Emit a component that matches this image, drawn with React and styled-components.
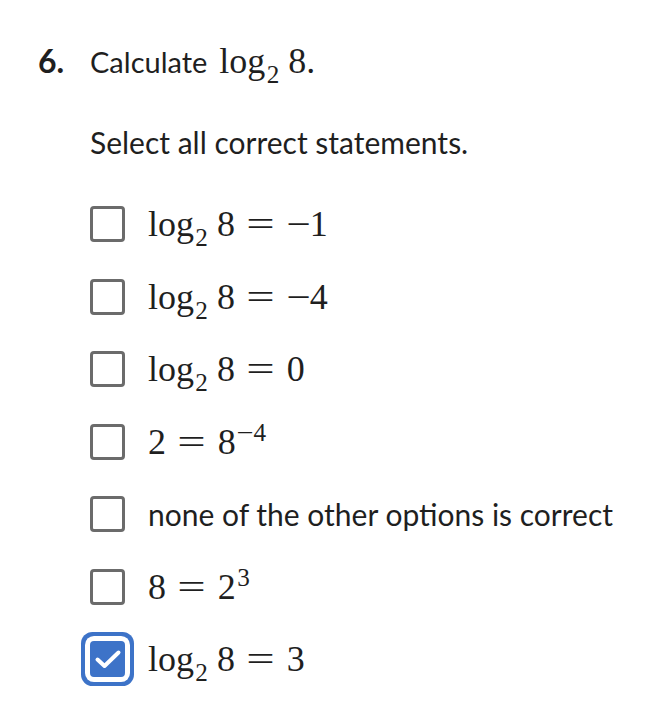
import React, { useState } from "react";
import styled, { createGlobalStyle } from "styled-components";

const GlobalStyle = createGlobalStyle`
  body {
    margin: 0;
    background: #ffffff;
    color: #1f1f1f;
    font-family: "Source Sans Pro", Lato, "Noto Sans", sans-serif;
  }
`;

const Page = styled.div`
  padding: 40px 0 0 38px;
`;

const Question = styled.div`
  display: flex;
  align-items: baseline;
`;

const Number = styled.div`
  width: 52px;
  font-size: 32px;
  font-weight: 700;
`;

const Body = styled.div`
  display: flex;
  flex-direction: column;
`;

const Prompt = styled.div`
  font-size: 29px;
  line-height: 44px;
`;

const Hint = styled.div`
  font-size: 30px;
  margin-top: 40px;
  margin-bottom: 28px;
`;

const Options = styled.ul`
  list-style: none;
  margin: 0;
  padding: 0;
  display: flex;
  flex-direction: column;
`;

const Option = styled.li`
  display: flex;
  align-items: center;
  height: 72.5px;
  gap: 23px;
  cursor: pointer;
`;

const Box = styled.span`
  box-sizing: border-box;
  width: 35px;
  height: 36px;
  flex: none;
  border-radius: 4px;
  border: 3.5px solid ${({ $checked }) => ($checked ? "#3d73c8" : "#6b6b6b")};
  background: ${({ $checked }) => ($checked ? "#3d73c8" : "#fff")};
  display: flex;
  align-items: center;
  justify-content: center;
  box-shadow: ${({ $checked }) =>
    $checked ? "0 0 0 5px #fff, 0 0 0 9px #3d73c8" : "none"};
`;

const Label = styled.span`
  font-size: 30px;
`;

const Math = styled.span`
  font-family: "Liberation Serif", "DejaVu Serif", serif;
  font-size: 36px;
  line-height: 1;
  white-space: nowrap;
  margin-left: ${({ $inline }) => ($inline ? "12px" : "0")};
`;

const Sub = styled.sub`
  font-size: 0.7em;
  vertical-align: -0.4em;
  margin-right: 0.36em;
  margin-left: 0.05em;
  line-height: 0;
`;

const Sup = styled.sup`
  font-size: 0.7em;
  vertical-align: 0.5em;
  margin-left: 0.06em;
  line-height: 0;
`;

const Sign = styled.span`
  display: inline-block;
  width: ${({ $w }) => $w};
  text-align: center;
  transform: scaleX(${({ $sx }) => $sx});
`;

const Rel = () => (
  <Sign $w="0.75em" $sx={1.4} style={{ margin: "0 0.36em 0 0.33em" }}>
    =
  </Sign>
);

const Minus = () => (
  <Sign $w="0.64em" $sx={1.2}>
    −
  </Sign>
);

const Log = () => (
  <>
    log<Sub>2</Sub>
  </>
);

const Check = () => (
  <svg width="28" height="22" viewBox="0 0 28 22" fill="none">
    <path
      d="M3.5 11.5 L10.5 18 L24.5 4.5"
      stroke="#fff"
      strokeWidth="4"
      strokeLinecap="round"
      strokeLinejoin="round"
    />
  </svg>
);

const options = [
  { id: 1, math: <><Log />8<Rel /><Minus />1</> },
  { id: 2, math: <><Log />8<Rel /><Minus />4</> },
  { id: 3, math: <><Log />8<Rel />0</> },
  { id: 4, math: <>2<Rel />8<Sup><Minus />4</Sup></> },
  { id: 5, text: "none of the other options is correct" },
  { id: 6, math: <>8<Rel />2<Sup>3</Sup></> },
  { id: 7, math: <><Log />8<Rel />3</> },
];

export default function App() {
  const [selected, setSelected] = useState([7]);

  const toggle = (id) =>
    setSelected((s) => (s.includes(id) ? s.filter((x) => x !== id) : [...s, id]));

  return (
    <Page>
      <GlobalStyle />
      <Question>
        <Number>6.</Number>
        <Body>
          <Prompt>
            Calculate
            <Math $inline>
              <Log />8.
            </Math>
          </Prompt>
          <Hint>Select all correct statements.</Hint>
          <Options>
            {options.map((o) => {
              const checked = selected.includes(o.id);
              return (
                <Option key={o.id} onClick={() => toggle(o.id)}>
                  <Box $checked={checked}>{checked && <Check />}</Box>
                  {o.text ? <Label>{o.text}</Label> : <Math>{o.math}</Math>}
                </Option>
              );
            })}
          </Options>
        </Body>
      </Question>
    </Page>
  );
}
